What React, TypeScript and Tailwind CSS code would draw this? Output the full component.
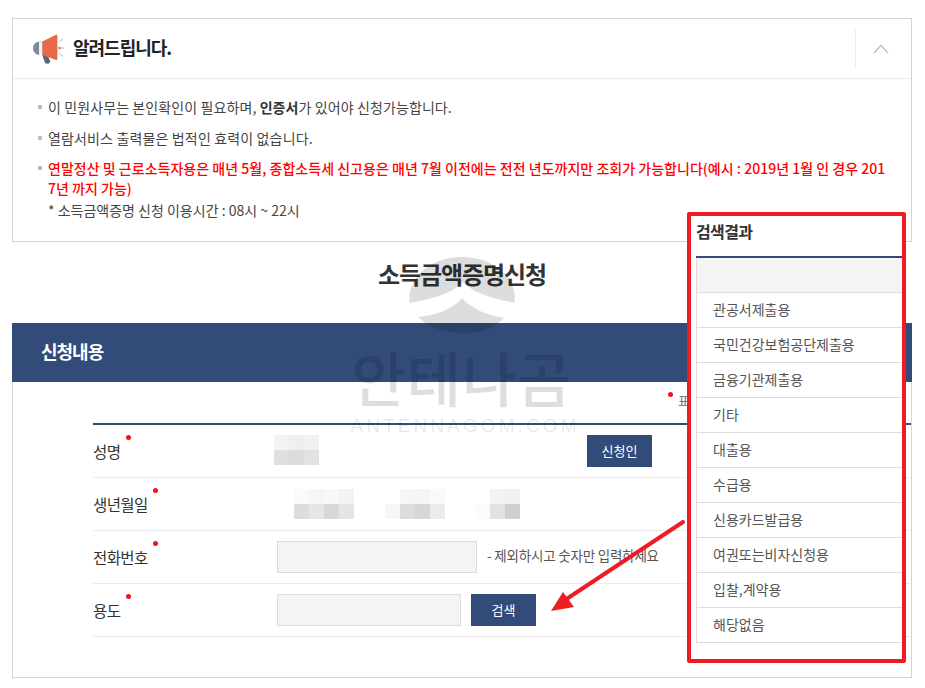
const fontClass = "font-['Noto_Sans_CJK_KR','Noto_Sans',sans-serif]";

const searchResults = [
  "관공서제출용",
  "국민건강보험공단제출용",
  "금융기관제출용",
  "기타",
  "대출용",
  "수급용",
  "신용카드발급용",
  "여권또는비자신청용",
  "입찰,계약용",
  "해당없음",
];

const Megaphone = () => (
  <svg width="33" height="30" viewBox="0 0 33 30" className="shrink-0">
    <path d="M9 20l5.500 1.500 2.500 5c.6 1.800-.4 3-2.200 3.200-1.700.1-2.800-.6-3.300-2.200z" fill="#56677a" />
    <path d="M7 7.500h4v13.500H7C3 21 0 18 0 14.200S3 7.500 7 7.500z" fill="#7d8a99" />
    <path d="M6 7.500h3.500V21H6z" fill="#f1f1f1" />
    <path d="M9.500 7.500 23 .8c.8-.3 1.400.2 1.400 1V25c0 .9-.6 1.300-1.400 1L9.500 21z" fill="#e8684a" />
    <path d="M27 14h4.500M26.500 8l3-3M26.500 19.500l3 3" stroke="#a9b2bc" strokeWidth="1" fill="none" />
    <circle cx="26.500" cy="14" r="1.200" fill="#e8684a" />
  </svg>
);

const Bullet = () => (
  <span className="absolute left-[-10px] top-[8px] h-1 w-1 bg-[#bdbdbd]" />
);

const RedDot = ({ className }: { className: string }) => (
  <span className={`absolute h-[5px] w-[5px] rounded-full bg-[#f4101c] ${className}`} />
);

const NoticeBox = () => (
  <div className="h-[224px] border border-[#d4d4d4] bg-white">
    <div className="flex h-[60px] items-center justify-between border-b border-[#ebebeb] pl-5">
      <div className="flex items-center gap-[7px]">
        <Megaphone />
        <h2 className="pb-[2px] text-[18px] font-bold tracking-[-1px] text-[#222]">알려드립니다.</h2>
      </div>
      <div className="flex h-10 w-[56px] items-center justify-center border-l border-[#ececec] pr-[6px]">
        <svg width="16" height="10" viewBox="0 0 16 10">
          <path d="M1 9l7-7.500L15 9" stroke="#b8bcc0" strokeWidth="1.200" fill="none" />
        </svg>
      </div>
    </div>
    <ul className="pl-[35px] pr-[23px] pt-[18px] text-[14px] leading-5 text-[#444]">
      <li className="relative tracking-[0.1px]">
        <Bullet />이 민원사무는 본인확인이 필요하며, <b className="font-bold text-[#333]">인증서</b>가 있어야 신청가능합니다.
      </li>
      <li className="relative mt-[11px] tracking-[0.15px]">
        <Bullet />열람서비스 출력물은 법적인 효력이 없습니다.
      </li>
      <li className="relative mt-[10px]">
        <Bullet />
        <span className="break-all font-medium tracking-[0.02px] text-[#ff0000]">
          연말정산 및 근로소득자용은 매년 5월, 종합소득세 신고용은 매년 7월 이전에는 전전 년도까지만 조회가 가능합니다(예시 : 2019년 1월 인 경우 2017년 까지 가능)
        </span>
        <p className="mt-[2px]">* 소득금액증명 신청 이용시간 : 08시 ~ 22시</p>
      </li>
    </ul>
  </div>
);

const Blur = ({ cols, cellW, cellClasses }: { cols: string; cellW: string; cellClasses: string[] }) => (
  <div className={`grid ${cols}`}>
    {cellClasses.map((c, i) => (
      <div key={i} className={`h-[15px] ${cellW} ${c}`} />
    ))}
  </div>
);

const FormRow = ({ label, dot, children }: { label: string; dot: string; children: React.ReactNode }) => (
  <div className="relative flex h-[53px] items-center border-b border-[#ececec]">
    <span className="w-[181px] pt-[2px] text-[15.500px] tracking-[-0.6px] text-[#333]">{label}</span>
    <RedDot className={dot} />
    {children}
  </div>
);

const ApplyForm = () => (
  <div className="h-[296px] border border-t-0 border-[#d4d4d4] bg-white">
    <div className="relative ml-[80px] flex h-[41px] items-end pb-[14px] pl-[585px] text-xs text-[#666]">
      <RedDot className="left-[575px] top-[10px]" />
      <span className="whitespace-nowrap">표시는</span>
    </div>
    <div className="ml-[80px] border-t-2 border-[#324b79]">
      <FormRow label="성명" dot="left-[33px] top-[10px]">
        <div className="mb-[2px]">
          <Blur
            cols="grid-cols-3"
            cellW="w-[15px]"
            cellClasses={["bg-[#f3f3f3]", "bg-[#efefef]", "bg-[#f1f1f1]", "bg-[#dfdfdf]", "bg-[#dcdcdc]", "bg-[#e2e2e2]"]}
          />
        </div>
        <button className="ml-[268px] h-8 w-[65px] bg-[#324b79] text-[13px] text-white">신청인</button>
      </FormRow>
      <FormRow label="생년월일" dot="left-[60px] top-[10px]">
        <div className="ml-[20px] flex">
          <Blur
            cols="grid-cols-4"
            cellW="w-[15px]"
            cellClasses={["bg-[#fafafa]", "bg-[#f6f6f6]", "bg-[#f8f8f8]", "bg-[#f3f3f3]", "bg-[#dddddd]", "bg-[#e6e6e6]", "bg-[#d8d8d8]", "bg-[#e3e6e4]"]}
          />
          <div className="ml-[31px]">
            <Blur
              cols="grid-cols-4"
              cellW="w-[15px]"
              cellClasses={["bg-white", "bg-[#f6f6f6]", "bg-[#f5f5f5]", "bg-[#f9f9f9]", "bg-[#f7f7f7]", "bg-[#dcdcdc]", "bg-[#d6d6d6]", "bg-[#e8ecef]"]}
            />
          </div>
          <div className="ml-[30px]">
            <Blur
              cols="grid-cols-3"
              cellW="w-[15px]"
              cellClasses={["bg-white", "bg-[#f3f3f3]", "bg-[#f1f1f1]", "bg-[#fbfbfb]", "bg-[#e2e2e2]", "bg-[#cfcfcb]"]}
            />
          </div>
        </div>
      </FormRow>
      <FormRow label="전화번호" dot="left-[60px] top-[10px]">
        <div className="ml-[3px] h-8 w-[200px] border border-[#dcdcdc] bg-[#f4f4f4]" />
        <span className="ml-[10px] pb-[3px] text-[13.500px] tracking-[-0.2px] text-[#555]">- 제외하시고 숫자만 입력하세요</span>
      </FormRow>
      <FormRow label="용도" dot="left-[33px] top-[10px]">
        <div className="ml-[3px] h-8 w-[184px] border border-[#dcdcdc] bg-[#f4f4f4]" />
        <button className="ml-[10px] h-8 w-[65px] bg-[#324b79] text-[13px] text-white">검색</button>
      </FormRow>
    </div>
  </div>
);

// 캡처 위에 얹힌 워터마크
const Watermark = () => (
  <div className="absolute left-[340px] top-[257px] flex w-[244px] flex-col items-center">
    <svg width="106" height="76" viewBox="0 0 106 76" className="opacity-[0.13]">
      <path d="M.6 46C-2 20 22 0 53 0s56 20 52.500 46C88 42 66 38 53.500 25 42 38 20 42 .6 46z" fill="#000" />
      <path d="M9 60c20-2 35-8 44-19 10 11 24 17 42 20-9 10-24 15-42 15-18 0-34-6-44-16z" fill="#000" />
    </svg>
    <span className="mt-[17px] text-[59px] font-medium leading-[54px] tracking-[1px] text-black/[0.13]">안테나곰</span>
    <span className="mt-[11px] whitespace-nowrap pl-[6px] font-['Liberation_Sans',sans-serif] text-[19px] leading-[22px] tracking-[3.100px] text-black/10">ANTENNAGOM.COM</span>
  </div>
);

const Arrow = () => (
  <svg width="150" height="110" viewBox="0 0 150 110" className="absolute left-[545px] top-[510px]">
    <path d="M138 12 20 90" stroke="#ee1c25" strokeWidth="4" strokeLinecap="round" fill="none" />
    <path d="M18 82 29 97 6 101z" fill="#ee1c25" />
  </svg>
);

const ResultPopup = () => (
  <div className="absolute left-[687px] top-[212px] h-[451px] w-[219px] rounded-[2px] border-[4px] border-[#ee1c25] bg-white pl-[5px]">
    <h3 className="flex h-[40px] items-center pb-[10px] text-[16px] font-bold tracking-[-0.6px] text-[#333]">검색결과</h3>
    <div className="border-t-2 border-[#324b79]">
      <div className="h-[35px] border-b border-l border-[#dddddd] bg-[#f4f4f4]" />
      {searchResults.map((item) => (
        <div
          key={item}
          className="flex h-[35px] items-center border-b border-l border-[#dddddd] pb-[2px] pl-4 text-[14px] text-[#555]"
        >
          {item}
        </div>
      ))}
    </div>
  </div>
);

export default function App() {
  return (
    <div className={`relative h-[688px] w-[925px] overflow-hidden bg-white px-3 pt-[18px] ${fontClass}`}>
      <div className="w-[900px]">
        <NoticeBox />
        <h1 className="flex h-[81px] items-center justify-center pb-[17px] text-[24px] font-bold tracking-[-1.100px] text-[#333]">
          소득금액증명신청
        </h1>
        <div className="flex h-[59px] items-center bg-[#324b79] pb-[2px] pl-[29px] text-[18px] font-bold tracking-[-1px] text-white">
          신청내용
        </div>
        <ApplyForm />
      </div>
      <Watermark />
      <Arrow />
      <ResultPopup />
    </div>
  );
}
